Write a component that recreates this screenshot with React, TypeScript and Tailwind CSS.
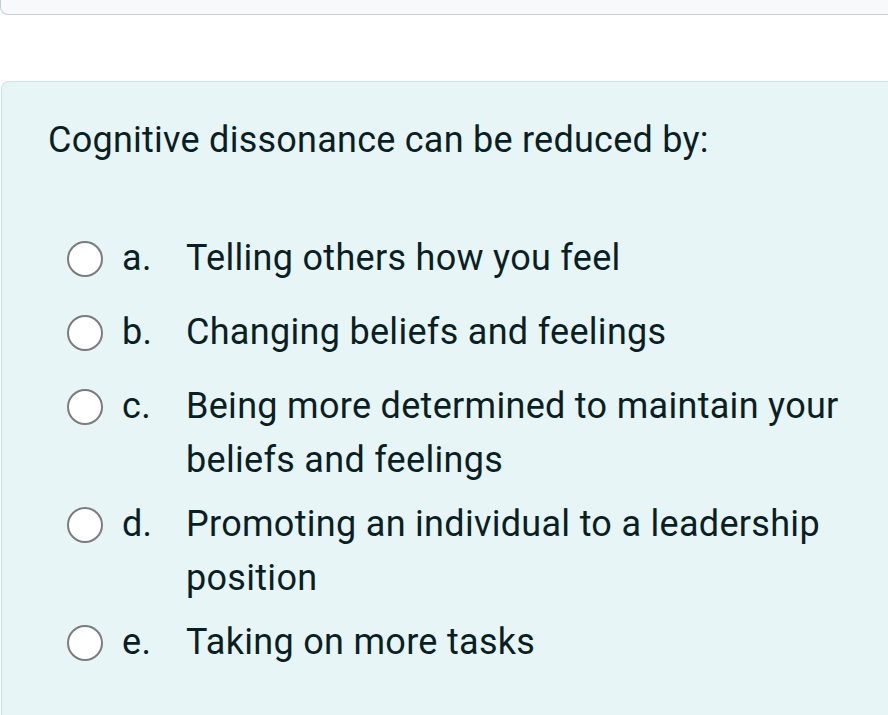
import React from "react"

const options = [
  { letter: "a.", text: "Telling others how you feel" },
  { letter: "b.", text: "Changing beliefs and feelings" },
  { letter: "c.", text: "Being more determined to maintain your beliefs and feelings" },
  { letter: "d.", text: "Promoting an individual to a leadership position" },
  { letter: "e.", text: "Taking on more tasks" },
]

export default function App() {
  return (
    <div className="w-[888px] h-[715px] overflow-hidden bg-white font-['Roboto',sans-serif] text-[#0a1f24]">
      {/* previous block */}
      <div className="w-[920px] h-[15px] bg-[#f8f9fa] border-l border-b border-[#c8ccd1] rounded-bl-lg" />

      {/* question */}
      <div className="w-[920px] h-[700px] mt-[66px] ml-px bg-[#e7f5f7] border-l border-t border-[#cae5ea] rounded-tl-lg pl-[46px] pt-[33px]">
        <h2 className="text-[36px] leading-[50px] tracking-[0.25px]">
          Cognitive dissonance can be reduced by:
        </h2>

        <div className="mt-[61px] flex flex-col pl-[19px]">
          {options.map(o => (
            <div key={o.letter} className="flex items-start py-[5px] min-h-[74px]">
              <span className="mt-[10px] w-[36px] h-[36px] rounded-full bg-white border-2 border-[#7c7c7c] shrink-0" />
              <span className="ml-[19px] w-[64px] text-[36px] leading-[54px] tracking-[0.3px] shrink-0">{o.letter}</span>
              <span className="w-[670px] text-[36px] leading-[54px] tracking-[0.3px]">{o.text}</span>
            </div>
          ))}
        </div>
      </div>
    </div>
  )
}
